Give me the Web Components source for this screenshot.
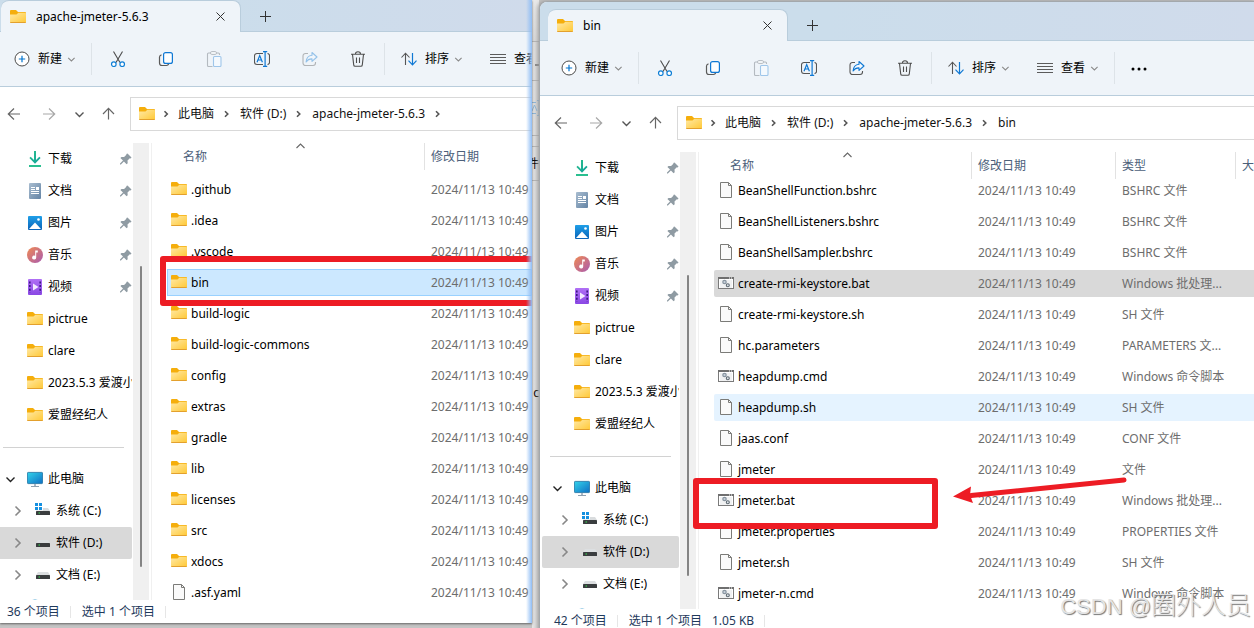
<!DOCTYPE html>
<html lang="zh-CN">
<head>
<meta charset="utf-8">
<title>文件资源管理器</title>
<style>
  html, body { margin: 0; height: 100%; }
  body {
    font: 12px/16px "Noto Sans", "Noto Sans CJK SC", sans-serif;
    color: #000;
    background: #c4c4c4;
    overflow: hidden;
  }
</style>
</head>
<body>
<desktop-view>
  <explorer-window class="back" slot="back" caption="apache-jmeter-5.6.3" path="apache-jmeter-5.6.3" share="off" count="36 个项目" picked="选中 1 个项目">
    <file-table>
      <file-row name=".github"></file-row>
      <file-row name=".idea"></file-row>
      <file-row name=".vscode"></file-row>
      <file-row name="bin" state="selected" mark="wide"></file-row>
      <file-row name="build-logic"></file-row>
      <file-row name="build-logic-commons"></file-row>
      <file-row name="config"></file-row>
      <file-row name="extras"></file-row>
      <file-row name="gradle"></file-row>
      <file-row name="lib"></file-row>
      <file-row name="licenses"></file-row>
      <file-row name="src"></file-row>
      <file-row name="xdocs"></file-row>
      <file-row name=".asf.yaml" icon="file"></file-row>
    </file-table>
  </explorer-window>
  <explorer-window class="front" slot="front" caption="bin" path="apache-jmeter-5.6.3/bin" count="42 个项目" picked="选中 1 个项目" bytes="1.05 KB">
    <file-table>
      <file-row name="BeanShellFunction.bshrc" icon="file" type="BSHRC 文件"></file-row>
      <file-row name="BeanShellListeners.bshrc" icon="file" type="BSHRC 文件"></file-row>
      <file-row name="BeanShellSampler.bshrc" icon="file" type="BSHRC 文件"></file-row>
      <file-row name="create-rmi-keystore.bat" icon="batch" type="Windows 批处理..." state="inactive"></file-row>
      <file-row name="create-rmi-keystore.sh" icon="file" type="SH 文件"></file-row>
      <file-row name="hc.parameters" icon="file" type="PARAMETERS 文..."></file-row>
      <file-row name="heapdump.cmd" icon="batch" type="Windows 命令脚本"></file-row>
      <file-row name="heapdump.sh" icon="file" type="SH 文件" state="hover"></file-row>
      <file-row name="jaas.conf" icon="file" type="CONF 文件"></file-row>
      <file-row name="jmeter" icon="file" type="文件"></file-row>
      <file-row name="jmeter.bat" icon="batch" type="Windows 批处理..." mark="box"></file-row>
      <file-row name="jmeter.properties" icon="file" type="PROPERTIES 文件"></file-row>
      <file-row name="jmeter.sh" icon="file" type="SH 文件"></file-row>
      <file-row name="jmeter-n.cmd" icon="batch" type="Windows 命令脚本"></file-row>
    </file-table>
  </explorer-window>
  <water-mark slot="mark">CSDN @<span>圈外人员</span></water-mark>
</desktop-view>

<script>
const ICONS = {
  folder: '<defs><linearGradient id="g" x1="0" y1="0" x2="1" y2="1"><stop offset="0" stop-color="#ffe9a6"/><stop offset="1" stop-color="#ffc834"/></linearGradient></defs><g transform="translate(0 -1)"><path d="M0 3a1 1 0 0 1 1-1h5l2 2h7a1 1 0 0 1 1 1v5H0z" fill="#f5ae0c"/><path d="M0 6.500h6.500L8.300 4.800H15a1 1 0 0 1 1 1V14a1 1 0 0 1-1 1H1a1 1 0 0 1-1-1z" fill="url(#g)"/><path d="M.3 14.500h15.400" stroke="#e3a02d"/></g>',
  file: '<path d="M2.500.5h8l3 3v12h-11z" fill="#fafafa" stroke="#7b7b78"/><path d="M10.500.5v3h3" fill="none" stroke="#7b7b78"/>',
  batch: '<rect x=".5" y="2.500" width="15" height="11" fill="#fff" stroke="#7a7a7a"/><path d="M0 3h16" stroke="#6f6f6f" stroke-width="2"/><path d="M11 3h1M13 3h1" stroke="#fff"/><rect x="2" y="5" width="12" height="8" fill="#f0f1f2"/><circle cx="6.500" cy="7" r="1.700" fill="#c9d3dc" stroke="#8794a0" stroke-width="1.200"/><circle cx="9.800" cy="10.300" r="1.500" fill="#dde3e8" stroke="#5f6a73" stroke-width="1.100"/>',
  download: '<defs><linearGradient id="g" x1="0" y1="0" x2="1" y2="1"><stop offset="0" stop-color="#2cc28b"/><stop offset="1" stop-color="#0f9f9b"/></linearGradient></defs><path d="M7 0h2v9l3.300-3.300 1.300 1.400L8 12.700 2.400 7.100l1.300-1.400L7 9z" fill="url(#g)"/><path d="M2 14h12v2H2z" fill="#2abf90"/>',
  document: '<defs><linearGradient id="g" x1="0" y1="0" x2="1" y2="1"><stop offset="0" stop-color="#a9bdd0"/><stop offset="1" stop-color="#6484a5"/></linearGradient></defs><rect x="2" width="12" height="16" rx="1" fill="url(#g)"/><path d="M4 4.500h4M4 6.500h4M4 8.500h8M4 10.500h8" stroke="#fff"/><rect x="9" y="4" width="3" height="3" fill="#fff"/>',
  picture: '<defs><linearGradient id="g" x1="0" y1="0" x2="0" y2="1"><stop offset="0" stop-color="#1f9fe8"/><stop offset="1" stop-color="#0a63b8"/></linearGradient></defs><rect x="1" y="1" width="14" height="14" rx="1" fill="url(#g)"/><path d="M2 14l6-6.500 6 6.500z" fill="#fff"/><circle cx="11.500" cy="4.500" r="1.300" fill="#fff"/>',
  music: '<defs><linearGradient id="g" x1="0" y1="0" x2="1" y2="1"><stop offset="0" stop-color="#f08a52"/><stop offset="1" stop-color="#a95bb0"/></linearGradient></defs><circle cx="8" cy="8" r="8" fill="url(#g)"/><path d="M8.200 3.500h2.600v2H9.200V10.500a2 2 0 1 1-1-1.700z" fill="#fff"/>',
  video: '<defs><linearGradient id="g" x1="0" y1="0" x2="0" y2="1"><stop offset="0" stop-color="#b070f5"/><stop offset="1" stop-color="#8a48e4"/></linearGradient></defs><rect x="1" width="14" height="16" rx="1" fill="url(#g)"/><path d="M2.800 2.500v11M13.200 2.500v11" stroke="#3b1a80" stroke-width="1.600" stroke-dasharray="2 1.600"/><path d="M6 4.500L11.500 8 6 11.500z" fill="#f3eaff"/>',
  computer: '<defs><linearGradient id="g" x1="0" y1="0" x2="1" y2="1"><stop offset="0" stop-color="#33d3ea"/><stop offset="1" stop-color="#0f6fc4"/></linearGradient></defs><rect x=".4" y="1.400" width="15.200" height="11.200" rx=".8" fill="url(#g)" stroke="#1a6ea0" stroke-width=".8"/><path d="M7 13h2v2H7z" fill="#a9b7c4"/><path d="M4 15.500h8" stroke="#8fa0b0"/>',
  system: '<path d="M0 0h3v3H0zM4 0h3v3H4zM0 4h3v3H0zM4 4h3v3H4z" fill="#1590e0"/><path d="M8 5h5l2 3H1V7.500h7z" fill="#d9dcde"/><rect x="1" y="8" width="14" height="4" rx=".6" fill="#3a3d3f"/><path d="M3.500 10h1.500" stroke="#35e04f"/>',
  drive: '<path d="M3 5h10l2 3H1z" fill="#dcdfe1"/><rect x="1" y="8" width="14" height="4" rx=".6" fill="#3a3d3f"/><path d="M3.500 10h1.500" stroke="#35e04f"/>',
  network: '<circle cx="8" cy="8" r="7.500" fill="#3f9fcf"/>',
  pin: '<path d="M10.500 2.500l4 4-.9.900-.8-.1-2.300 2.300.2 2.600-1.100 1.100-2.700-2.700-3 3H3v-1l3-3-2.600-2.600 1.100-1.100 2.600.2 2.300-2.300-.1-.8z" fill="#8f9ba3"/>',
  add: '<circle cx="8" cy="8" r="7" fill="#fff" stroke="#4b4b4b"/><path d="M8 4.800v6.400M4.800 8h6.400" stroke="#0074d0" stroke-width="1.200"/>',
  cut: '<path d="M3.500.5l6.500 11M12.500.5L6 11.500" stroke="#4d4d4d" stroke-width="1.100"/><circle cx="3.800" cy="13.200" r="2.300" fill="#fff" stroke="#0f7fd6" stroke-width="1.200"/><circle cx="12.200" cy="13.200" r="2.300" fill="#fff" stroke="#0f7fd6" stroke-width="1.200"/>',
  copy: '<path d="M3.500 3.800A2.500 2.500 0 0 0 1.500 6v6a2.500 2.500 0 0 0 2.500 2.500h4.500a2.500 2.500 0 0 0 2.200-1.500" fill="none" stroke="#5a5a5a" stroke-width="1.200"/><rect x="5.600" y="1.600" width="8.800" height="10.800" rx="2" fill="#fdfeff" stroke="#0f78d4" stroke-width="1.200"/>',
  paste: '<path d="M5 2H2.500a1 1 0 0 0-1 1v11.500a1 1 0 0 0 1 1h4M10 2h2.500a1 1 0 0 1 1 1v1" fill="none" stroke="#b4bac0" stroke-width="1.100"/><rect x="4.500" y=".6" width="6" height="2.800" rx="1.300" fill="#f8fafc" stroke="#b4bac0"/><rect x="7.500" y="5.500" width="7.500" height="10" rx="1" fill="#f4f9fe" stroke="#9fc6ea" stroke-width="1.100"/>',
  rename: '<path d="M9 2.500H3A2.500 2.500 0 0 0 .5 5v6A2.500 2.500 0 0 0 3 13.500h6M13.500 2.500A2.200 2.200 0 0 1 15.500 5v6a2.200 2.200 0 0 1-2 2.500" fill="none" stroke="#555" stroke-width="1.100"/><path d="M3 11.200L5.700 4.500 8.400 11.200M4 9h3.500" fill="none" stroke="#0f78d4" stroke-width="1.200"/><path d="M9 .6h4.200M9 15.400h4.200M11.100.6v14.800" stroke="#0f78d4" stroke-width="1.200"/>',
  share: '<path d="M6 2.500H3.500a2.500 2.500 0 0 0-2.500 2.500v7a2.500 2.500 0 0 0 2.500 2.500h7.500a2.500 2.500 0 0 0 2.500-2.500v-1" fill="none" stroke="#555" stroke-width="1.100"/><path d="M10 1.500l5 4.500-5 4.300V7.900C7.200 7.800 5.500 8.800 4.100 11c.2-3.800 2.300-6.400 5.900-6.800z" fill="#f4f9fe" stroke="#0f78d4" stroke-width="1.100" stroke-linejoin="round"/>',
  trash: '<path d="M1 3.300h14M5.500 3c0-1.300 1-2.200 2.500-2.200s2.500.9 2.500 2.200M2.500 3.500l1.200 10.400a1.500 1.500 0 0 0 1.500 1.400h5.600a1.500 1.500 0 0 0 1.500-1.400L13.500 3.500M6.500 6.500v5.500M9.500 6.500v5.500" fill="none" stroke="#4f4f4f" stroke-width="1.100"/>',
  sort: '<path d="M4.500 14V2.500M.5 6.500l4-4.300 4 4.300" fill="none" stroke="#555" stroke-width="1.100"/><path d="M11.500 2v11.500M7.500 9.700l4 4.200 4-4.200" fill="none" stroke="#0f78d4" stroke-width="1.200"/>',
  view: '<path d="M0 3.500h16M0 6.500h16M0 9.500h16M0 12.500h16" stroke="#5b5b5b"/>',
  more: '<circle cx="2" cy="9" r="1.500"/><circle cx="8" cy="9" r="1.500"/><circle cx="14" cy="9" r="1.500"/>',
  close: '<path d="M4.500 3.500l8 8M12.500 3.500l-8 8" stroke="#333"/>',
  plus: '<path d="M8.500 3v11M3 8.500h11" stroke="#333"/>',
  back: '<path d="M14 8H2.500M8 2.500L2.300 8 8 13.500" fill="none" stroke="#666" stroke-width="1.200"/>',
  forward: '<path d="M2 8h11.500M8 2.500L13.700 8 8 13.500" fill="none" stroke="#a8a8a8" stroke-width="1.200"/>',
  up: '<path d="M8.500 13.500v-11M3 8l5.500-5.700L14 8" fill="none" stroke="#666" stroke-width="1.200"/>',
  down: '<path d="M4.500 6.500l4 4 4-4" fill="none" stroke="currentColor" stroke-width="1.400"/>',
  right: '<path d="M5.500 3.500L10 8l-4.500 4.500" fill="none" stroke="currentColor" stroke-width="1.600"/>',
  crumb: '<path d="M6 5.200l2.800 2.800L6 10.800" fill="none" stroke="#555" stroke-width="1.600"/>',
  sorted: '<path d="M4.500 10l4-4 4 4" fill="none" stroke="#666" stroke-width="1.100"/>'
};

function define(name, css, html) {
  customElements.define(name, class extends HTMLElement {
    connectedCallback() {
      if (this.shadowRoot) return;
      this.attachShadow({ mode: 'open' }).innerHTML =
        `<style>*,*::before,*::after{box-sizing:border-box}button{font:inherit;color:inherit;background:none;border:0;padding:0;margin:0}a{color:inherit;text-decoration:none}${css}</style>${html(this)}`;
    }
  });
}
const icon = (name, extra = '') => `<x-icon name="${name}" ${extra}></x-icon>`;

define('x-icon',
  `:host{display:inline-block;flex:none;width:16px;height:16px}
   :host([small]){width:8px;height:8px}
   svg{display:block;width:100%;height:100%}`,
  el => `<svg viewBox="${el.hasAttribute('small') ? '3 3 10 10' : '0 0 16 16'}" aria-hidden="true">${ICONS[el.getAttribute('name')]}</svg>`);

define('water-mark',
  `:host{display:block;font:22px/28px "Liberation Sans","Noto Sans CJK SC",sans-serif;color:#e4e4e4;text-shadow:1px 1px 1px #777;white-space:nowrap;pointer-events:none}
   ::slotted(span){font-size:25px;font-weight:300}`,
  () => `<slot></slot>`);

define('backdrop-strip',
  `:host{display:flex;flex-direction:column;overflow:hidden;background:linear-gradient(90deg,#e6e6e6,#d2d2d2)}
   div{display:flex;justify-content:flex-end;align-items:center;flex:none;border-bottom:1px solid #b5b5b5}
   .title{height:42px;background:linear-gradient(#e9e9e9,#dadada)}
   .bar{height:39px}
   .tools{height:55px}
   .gap{height:11px}
   .head{height:34px}
   .body{flex:1;align-items:flex-start;border:0;padding-top:204px}
   svg{display:block;flex:none}`,
  () => `<div class="title"></div>
   <div class="bar"><svg width="7" height="16" viewBox="0 0 7 16"><path d="M3 12h4" stroke="#333"/></svg></div>
   <div class="tools"><svg width="7" height="16" viewBox="0 0 7 16"><path d="M0 2.500h4M0 13.500h4M5 .5h2v15H5M0 11l2.500-6L5 11" fill="none" stroke="#8db6d8"/></svg></div>
   <div class="gap"></div><div class="head">件</div><div class="body">c</div>`);

define('desktop-view',
  `:host{display:grid;grid-template-columns:minmax(0,532fr) 7px minmax(0,715fr);height:100vh;position:relative;overflow:hidden}
   ::slotted(.back){margin-bottom:5px}
   ::slotted(.front){margin:1px 0 -4px}
   ::slotted(water-mark){position:absolute;right:3px;bottom:7px;z-index:5}`,
  () => `<slot name="back"></slot><backdrop-strip></backdrop-strip><slot name="front"></slot><slot name="mark"></slot>`);

define('command-bar',
  `:host{display:flex;align-items:center;flex:none;height:55px;padding-left:calc(var(--inset) + 14px);background:#eff4f9;border-bottom:1px solid #b9cddc;overflow:hidden}
   button{display:flex;flex:none;align-items:center;white-space:nowrap}
   .label{gap:8px}
   .label x-icon[small]{margin-left:-3px;color:#8a8a8a}
   .tool{width:48px;height:40px;justify-content:center}
   .tool[disabled] x-icon[name=share]{opacity:.4}
   .tools{display:flex;flex:none;margin:0 2px}
   i{flex:none;width:1px;height:32px;background:#dde3e8}
   .end{margin-left:16px}
   .label + .label{margin-left:28px}`,
  el => `<button class="label">${icon('add')}新建${icon('down', 'small')}</button><i class="end"></i>
   <div class="tools">${[['cut', '剪切'], ['copy', '复制'], ['paste', '粘贴'], ['rename', '重命名'], ['share', '共享'], ['trash', '删除']].map(([n, t]) =>
     `<button class="tool" aria-label="${t}" ${n === 'paste' || (n === 'share' && el.getAttribute('share') === 'off') ? 'disabled' : ''}>${icon(n)}</button>`).join('')}</div>
   <i></i><button class="label end">${icon('sort')}排序${icon('down', 'small')}</button>
   <button class="label">${icon('view')}查看${icon('down', 'small')}</button><i class="end"></i>
   <button class="end" aria-label="更多">${icon('more')}</button>`);

define('address-bar',
  `:host{display:flex;flex:none;height:56px;padding:10px 0 12px calc(var(--inset) + 6px);overflow:hidden}
   .nav{display:flex;align-items:center;flex:none;width:124px}
   button{display:block;flex:none;height:16px;width:16px;color:#555}
   .nav button + button{margin-left:19px}
   .nav button:nth-child(3){margin-left:14px}
   .nav button:nth-child(4){margin-left:13px}
   nav{flex:1 0 0;min-width:0;display:flex;align-items:center;border:1px solid #d9d9d9;border-right:0;padding-left:8px;white-space:nowrap;color:#111}
   nav x-icon[name=crumb]{width:26px}
   nav x-icon:first-child + x-icon{width:23px}`,
  el => `<div class="nav">${[['back', '后退'], ['forward', '前进'], ['down', '最近'], ['up', '向上']].map(([n, t]) => `<button aria-label="${t}">${icon(n)}</button>`).join('')}</div>
   <nav aria-label="路径">${icon('folder')}${icon('crumb')}${['此电脑', '软件 (D:)', ...el.getAttribute('path').split('/')].map(t => `<a href="#">${t}</a>`).join(icon('crumb'))}${el.getAttribute('path').includes('/') ? '' : icon('crumb')}</nav>`);

define('tree-item',
  `:host{display:block;flex:none;height:32px;margin-left:calc(var(--inset) - 5px);margin-right:1px;border-radius:2px}
   :host([selected]){background:#d9d9d9}
   a{display:flex;align-items:center;height:100%;padding-left:5px;overflow:hidden;white-space:nowrap}
   :host([drive]) a{padding-left:13px}
   .twist{flex:none;width:20px;height:16px;margin-right:7px;text-align:center;color:#222}
   :host([drive]) .twist{color:#888}
   .text{margin:0 auto 0 5px}
   x-icon[name=pin]{margin-right:-1px}`,
  el => `<a href="#"${el.title ? ` aria-label="${el.title}"` : ''}><span class="twist">${el.hasAttribute('drive') ? icon('right') : el.hasAttribute('open') ? icon('down') : ''}</span>${icon(el.getAttribute('icon'))}<span class="text"><slot></slot></span>${el.hasAttribute('pinned') ? icon('pin') : ''}</a>`);

define('folder-tree',
  `:host{display:flex;flex:none;overflow:hidden}
   .items{display:flex;flex-direction:column;width:calc(var(--inset) + 133px);overflow:hidden}
   hr{flex:none;width:121px;height:1px;border:0;background:#d2d2d2;margin:16px 0 15px calc(var(--inset) + 3px)}
   .bar{width:16px;background:#f0f0f0;padding-top:123px}
   .bar div{width:2px;height:301px;margin-left:7px;background:#858585;border-radius:1px}`,
  () => `<div class="items">
   <tree-item icon="download" pinned>下载</tree-item><tree-item icon="document" pinned>文档</tree-item>
   <tree-item icon="picture" pinned>图片</tree-item><tree-item icon="music" pinned>音乐</tree-item>
   <tree-item icon="video" pinned>视频</tree-item><tree-item icon="folder">pictrue</tree-item>
   <tree-item icon="folder">clare</tree-item><tree-item icon="folder">2023.5.3 爱渡小</tree-item>
   <tree-item icon="folder">爱盟经纪人</tree-item><hr>
   <tree-item icon="computer" open>此电脑</tree-item><tree-item icon="system" drive>系统 (C:)</tree-item>
   <tree-item icon="drive" drive selected>软件 (D:)</tree-item><tree-item icon="drive" drive>文档 (E:)</tree-item>
   <tree-item icon="network" title="网络"></tree-item></div><div class="bar"><div></div></div>`);

const ARROW = '<svg class="arrow" width="176" height="36" viewBox="0 0 176 36" aria-hidden="true"><path d="M18 21.500L171 6" stroke="#ed1c24" stroke-width="5" stroke-linecap="round"/><path d="M0 22.500L18 12.500 17 21l3 8z" fill="#ed1c24"/></svg>';

define('file-table',
  `:host{display:block;padding-left:15px}
   table,thead,tbody{display:block}
   tr{display:grid;grid-template-columns:257px 144px 120px minmax(0,1fr);position:relative;height:27px;margin-bottom:4px;text-align:left}
   thead tr{margin-bottom:var(--head-gap)}
   th,td{display:flex;align-items:center;padding:0 0 0 7px;font-weight:400;white-space:nowrap;min-width:0;color:#6d6d6d}
   th{color:#4c607a;border-left:1px solid #e2e2e2;padding-left:6px;overflow:hidden}
   th:first-child{border:0;padding-left:16px}
   th x-icon{position:absolute;left:125px;top:-5px}
   td:first-child{padding-left:4px;gap:4px;color:#000}
   td x-icon{margin-bottom:1px}
   .selected{background:#cce8ff;box-shadow:inset 0 0 0 1px #99d1ff}
   .inactive{background:#d9d9d9;border-radius:2px 0 0 2px}
   .hover{background:#e5f3ff;border-radius:2px 0 0 2px}
   .wide::after,.box::after{content:"";position:absolute;z-index:2;border:6px solid #ed1c24;border-radius:3px}
   .wide::after{left:-7px;right:-10px;top:-13px;height:50px}
   .box::after{left:-21px;width:245px;top:-9px;height:51px}
   .arrow{position:absolute;left:239px;top:-13px;z-index:2}`,
  el => {
    const front = el.parentElement.classList.contains('front');
    return `<table><thead><tr><th>名称${icon('sorted')}</th><th>修改日期</th>${front ? '<th>类型</th><th>大小</th>' : ''}</tr></thead><tbody>${[...el.querySelectorAll('file-row')].map(r => {
      const a = n => r.getAttribute(n) || '';
      return `<tr class="${a('state')} ${a('mark')}"><td>${icon(a('icon') || 'folder')}${a('name')}</td><td>2024/11/13 10:49</td>${front ? `<td>${a('type')}${a('mark') === 'box' ? ARROW : ''}</td>` : ''}</tr>`;
    }).join('')}</tbody></table>`;
  });

define('explorer-window',
  `:host{display:flex;flex-direction:column;position:relative;overflow:hidden;background:#fff;min-width:0;min-height:0;--inset:0px;--head-gap:6px}
   :host(.front){--inset:7px;--head-gap:-2px;border:solid #a3a8ac;border-width:1px 0 0 1px;border-radius:8px 0 0 0;box-shadow:-1px 0 4px #999}
   :host(.back){box-shadow:0 1px 2px #666}
   :host(.back)::after{content:"";position:absolute;inset:0 0 0 auto;width:6px;background:linear-gradient(90deg,#8fbdf500,#8fbdf5);z-index:3}
   header{display:flex;flex:none;align-items:flex-end;height:32px;padding-left:calc(var(--inset) + 1px);background:linear-gradient(90deg,#cbddeb 40%,#d0dbeb);border-bottom:1px solid #b9cddc}
   :host(.front) header{height:39px}
   .tab{display:flex;flex:none;align-items:center;width:240px;height:32px;margin-bottom:-1px;padding:0 12px 0 9px;background:#eff4f9;border:1px solid #b9cddc;border-width:1px 1px 0 0;border-radius:8px 8px 0 0}
   .tab span{flex:1;margin-left:10px}
   button{display:block;height:16px;width:16px}
   .new{margin:0 16px 7px}
   main{display:flex;flex:1 1 0;min-height:0;overflow:hidden}
   .list{flex:1;min-width:0;margin-left:2px;border-left:1px solid #f0f0f0}
   footer{display:flex;flex:none;align-items:center;height:23px;padding-left:calc(var(--inset) + 7px);color:#1e395b;white-space:nowrap}
   footer i{width:1px;height:12px;margin:0 11px 0 10px;background:#e6e6e6}
   .bytes{margin-left:10px}`,
  el => `<header><div class="tab">${icon('folder')}<span>${el.getAttribute('caption')}</span><button aria-label="关闭">${icon('close')}</button></div><button class="new" aria-label="新标签页">${icon('plus')}</button></header>
   <command-bar share="${el.getAttribute('share') || 'on'}"></command-bar>
   <address-bar path="${el.getAttribute('path')}"></address-bar>
   <main><folder-tree></folder-tree><div class="list"><slot></slot></div></main>
   <footer><span>${el.getAttribute('count')}</span><i></i><span>${el.getAttribute('picked')}</span>${el.hasAttribute('bytes') ? `<span class="bytes">${el.getAttribute('bytes')}</span>` : ''}<i></i></footer>`);
</script>
</body>
</html>
